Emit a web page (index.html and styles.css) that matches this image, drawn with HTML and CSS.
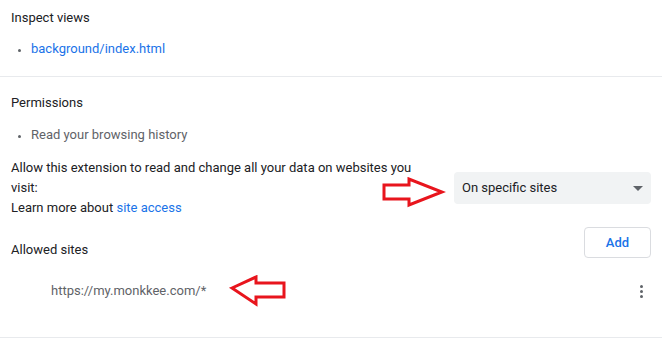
FILE: index.html
```html
<!DOCTYPE html>
<html>
<head>
<meta charset="utf-8">
<link rel="stylesheet" href="styles.css">
</head>
<body>
<div class="page">
  <section class="section first">
    <div class="heading">Inspect views</div>
    <ul class="list">
      <li><a class="link" href="#">background/index.html</a></li>
    </ul>
  </section>
  <section class="section second">
    <div class="heading">Permissions</div>
    <ul class="list second-list">
      <li>Read your browsing history</li>
    </ul>
    <div class="access-row">
      <div class="access-text">
        Allow this extension to read and change all your data on websites you visit:<br>
        Learn more about <a class="link" href="#">site access</a>
      </div>
      <div class="select">
        <span>On specific sites</span>
        <span class="caret"></span>
      </div>
    </div>
    <div class="allowed-row">
      <div class="heading allowed-label">Allowed sites</div>
      <button class="add-btn">Add</button>
    </div>
    <div class="site-row">
      <span class="site">https://my.monkkee.com/*</span>
      <span class="kebab"><i></i><i></i><i></i></span>
    </div>
  </section>
  <svg class="arrow arrow-right" width="64" height="34" viewBox="0 0 64 34">
    <polygon points="2,8 27,8 27,2 60,15 27,28 27,22 2,22" fill="#fff" stroke="#e8151d" stroke-width="3" stroke-linejoin="miter"/>
  </svg>
  <svg class="arrow arrow-left" width="60" height="32" viewBox="0 0 60 32">
    <polygon points="4,13 28,2 28,8 56,8 56,22 28,22 28,29" fill="#fff" stroke="#e8151d" stroke-width="3" stroke-linejoin="miter"/>
  </svg>
</div>
</body>
</html>
```

FILE: styles.css
```css
html, body {
  margin: 0;
  padding: 0;
  background: #fff;
}
body {
  font-family: Roboto, "Liberation Sans", Arial, sans-serif;
  font-size: 13px;
  line-height: 20px;
  color: #202124;
}
.page {
  position: relative;
  width: 662px;
  height: 340px;
  overflow: hidden;
}
.section {
  padding: 0 11px;
  border-bottom: 1px solid #e8eaed;
}
.first {
  padding-top: 8px;
  padding-bottom: 17px;
}
.second {
  padding-top: 16px;
  padding-bottom: 36px;
}
.heading {
  color: #202124;
}
.list {
  margin: 11px 0 0 0;
  padding: 0 0 0 20px;
}
.second-list {
  margin-top: 12px;
}
.list li {
  list-style: disc;
  color: #5f6368;
}
.list li::marker {
  font-size: 11px;
}
.link {
  color: #1a73e8;
  text-decoration: none;
}
.access-row {
  display: flex;
  align-items: center;
  margin-top: 13px;
}
.access-text {
  flex: 1;
  padding-right: 24px;
}
.select {
  width: 197px;
  height: 32px;
  box-sizing: border-box;
  background: #f1f3f4;
  border-radius: 4px;
  display: flex;
  align-items: center;
  justify-content: space-between;
  padding: 0 8px;
  color: #202124;
}
.caret {
  width: 0;
  height: 0;
  border-left: 5px solid transparent;
  border-right: 5px solid transparent;
  border-top: 5px solid #5f6368;
  margin-top: 1px;
}
.allowed-row {
  display: flex;
  justify-content: space-between;
  align-items: flex-end;
  margin-top: 9px;
}
.allowed-label {
  margin-bottom: -2px;
}
.add-btn {
  width: 67px;
  height: 31px;
  box-sizing: border-box;
  border: 1px solid #dadce0;
  border-radius: 4px;
  background: #fff;
  color: #1a73e8;
  font-family: Roboto, "Liberation Sans", Arial, sans-serif;
  font-size: 13px;
  font-weight: 500;
  padding: 0;
}
.site-row {
  display: flex;
  justify-content: space-between;
  align-items: center;
  margin-top: 23px;
  padding-left: 40px;
  padding-right: 8px;
}
.site {
  color: #5f6368;
}
.kebab {
  display: flex;
  flex-direction: column;
  gap: 2px;
}
.kebab i {
  display: block;
  width: 3px;
  height: 3px;
  border-radius: 50%;
  background: #5f6368;
}
.arrow {
  position: absolute;
}
.arrow-right {
  left: 382px;
  top: 177px;
}
.arrow-left {
  left: 228px;
  top: 275px;
}
```
